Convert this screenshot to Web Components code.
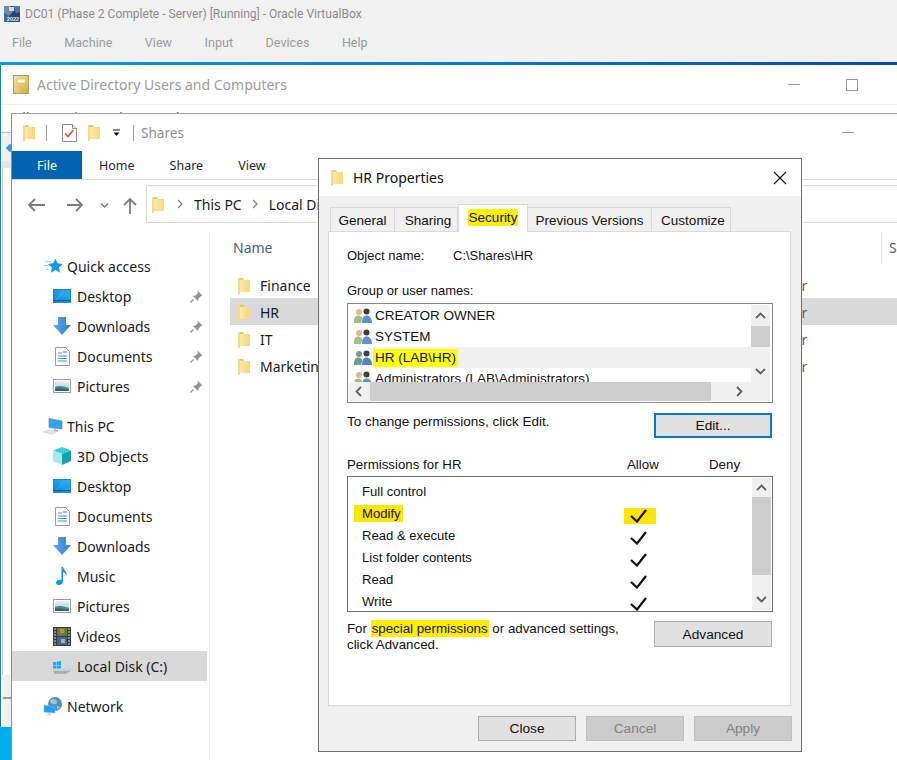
<!DOCTYPE html>
<html lang="en">
<head>
<meta charset="utf-8">
<title>HR Properties</title>
<style>
  html, body { margin: 0; padding: 0; height: 760px; overflow: hidden; background: #00aeef; }
  body { font-family: "Noto Sans", sans-serif; }
</style>
</head>
<body>
<vm-frame title-text="DC01 (Phase 2 Complete - Server) [Running] - Oracle VirtualBox">
  <ad-window>
    <explorer-window>
      <nav-pane slot="nav"></nav-pane>
      <file-pane slot="files"></file-pane>
    </explorer-window>
  </ad-window>
  <props-dialog></props-dialog>
</vm-frame>

<script>
const FOLDER = `<svg viewBox="0 0 12 17"><defs><linearGradient id="f" x1="0" x2="1"><stop offset="0" stop-color="#fce9ab"/><stop offset="1" stop-color="#fbd673"/></linearGradient></defs>
  <path d="M0 1h5l1 2h6v12H2v2H0z" fill="#e9c46c"/><path d="M2 3h10v12H2z" fill="url(#f)"/><path d="M0 1h2v16H0z" fill="#f4d98c"/></svg>`;

const ICONS = {
  folder: FOLDER,
  check: `<svg viewBox="0 0 15 18"><path d="M.5.5h10l4 4v13H.5z" fill="#fff" stroke="#8e8e8e"/><path d="M10.5.5v4h4" fill="#ececec" stroke="#8e8e8e"/><path d="M3 9.500l3 3 5.500-6.500" fill="none" stroke="#e4572e" stroke-width="1.700"/></svg>`,
  vbox: `<svg viewBox="0 0 16 16"><rect width="16" height="16" fill="#24466f"/><path d="M0 0h6l3 6-4 4-5-3z" fill="#6e8aa8"/><path d="M9 0h7v6l-4 1z" fill="#4a7cab"/><path d="M5 1h5v4H5z" fill="#d3dde6"/><path d="M0 8l5 2v6H0z" fill="#3a6a9a"/><text x="9" y="14.500" font-size="5.500" font-weight="700" text-anchor="middle" fill="#eef3f7" font-family="Liberation Sans">2022</text></svg>`,
  book: `<svg viewBox="0 0 16 19"><defs><linearGradient id="b" x1="0" x2="1" y1="0" y2="1"><stop offset="0" stop-color="#f5e8a6"/><stop offset="1" stop-color="#cfae45"/></linearGradient></defs><rect x=".5" y=".5" width="15" height="18" fill="url(#b)" stroke="#b89c4c"/><rect x="4" y="4" width="8" height="4" fill="#fffbe4" stroke="#c7b263" stroke-width=".6"/></svg>`,
  star: `<svg viewBox="0 0 20 20"><path d="M12 1.500l2.300 5.200 5.400.6-4 3.700 1.100 5.600L12 13.800l-4.800 2.800 1.100-5.600-4-3.700 5.400-.6z" fill="#1a96e8"/><path d="M1 5h6M0 9h4M2 13h3" stroke="#8ccbf2" stroke-width="1.200"/></svg>`,
  desktop: `<svg viewBox="0 0 18 14"><defs><linearGradient id="d" x1="0" x2="1" y1="1" y2="0"><stop offset="0" stop-color="#0c86dd"/><stop offset="1" stop-color="#31b2f7"/></linearGradient></defs><rect x=".5" y=".5" width="17" height="13" fill="url(#d)" stroke="#1a82ce"/><path d="M1 11.500h16" stroke="#0a4f8e"/><path d="M3 11l7-7" stroke="#5cc3f7" stroke-width=".5"/></svg>`,
  down: `<svg viewBox="0 0 18 18"><defs><linearGradient id="a" x1="0" x2="1"><stop offset="0" stop-color="#62a9e8"/><stop offset="1" stop-color="#2a7fd3"/></linearGradient></defs><path d="M5 0h8v8h5l-9 10L0 8h5z" fill="url(#a)"/></svg>`,
  doc: `<svg viewBox="0 0 15 19"><path d="M.5.5h10l4 4v14H.5z" fill="#fbfbfb" stroke="#9a9a9a"/><path d="M3 6h4M3 9h9M3 11.500h9M3 14h9" stroke="#3d94dc"/><path d="M8 5h4" stroke="#777"/></svg>`,
  pic: `<svg viewBox="0 0 18 14"><defs><linearGradient id="s" x1="0" x2="0" y1="0" y2="1"><stop offset="0" stop-color="#e6eef6"/><stop offset="1" stop-color="#a7c8de"/></linearGradient></defs><rect x=".5" y=".5" width="17" height="13" fill="#fff" stroke="#9d9d9d"/><rect x="2" y="2" width="14" height="10" fill="url(#s)"/><path d="M2 8c4-2 8-1 14 1v3H2z" fill="#4d8a83"/><path d="M2 10c4-1 8 0 14 1v1H2z" fill="#2e5f73"/></svg>`,
  pc: `<svg viewBox="0 0 20 17"><path d="M6 .5l13 2.500v8l-13-1.500z" fill="#2fa4ea" stroke="#5a8db4" stroke-width=".7"/><path d="M12 10.500v2l3 .5" fill="none" stroke="#9aa3ab" stroke-width="1.300"/><path d="M0 14l6-2 8 1.500-5 2.500z" fill="#e3e6e9" stroke="#c3c8cc" stroke-width=".5"/></svg>`,
  cube: `<svg viewBox="0 0 18 18"><path d="M9 0l9 3.500L9 7 0 3.500z" fill="#38d0d6"/><path d="M0 3.500L9 7v11l-9-4z" fill="#a5ebee"/><path d="M18 3.500L9 7v11l9-4z" fill="#14a0b5"/></svg>`,
  music: `<svg viewBox="0 0 12 18"><path d="M5.500 0h1.600c.4 3 4.400 4.500 3.600 9.500-.3-2.500-2-4-3.700-4.500v9.500c0 2-2 3.500-4 3.500-1.700 0-3-1-3-2.300 0-1.700 2-3 4-3 .6 0 1.200.1 1.500.3z" fill="#1597ea"/></svg>`,
  film: `<svg viewBox="0 0 18 19"><rect width="18" height="19" fill="#3a3a3a"/><rect x="4" y="1" width="10" height="8" fill="#5a7f3a"/><rect x="4" y="10" width="10" height="8" fill="#3b63b8"/><rect x="7" y="2" width="4" height="4" fill="#c98a2e"/><rect x="8" y="12" width="4" height="4" fill="#c8b04a"/><path d="M1 2h2M1 5h2M1 8h2M1 11h2M1 14h2M1 17h2M15 2h2M15 5h2M15 8h2M15 11h2M15 14h2M15 17h2" stroke="#ddd"/></svg>`,
  disk: `<svg viewBox="0 0 20 15"><path d="M1 3.300l3.500-.5v3.200H1zM5 2.700L9 2v4H5zM1 6.500h3.500v3.200L1 9.200zM5 6.500h4v4l-4-.6z" fill="#12b0ee"/><path d="M1 12l5-2.500h13.500v2.500l-6 3H3z" fill="#cfd2d4"/><path d="M1 12l2 2.800h10.500l6-3" fill="#a9adb0"/></svg>`,
  net: `<svg viewBox="0 0 20 19"><circle cx="12" cy="7" r="7" fill="#4b93c9"/><path d="M7 3c3-2 6-1 7 1s-2 4-4 3-3-1-3-4zM14 9c2 0 3 1 3 2l-3 1z" fill="#a4c7bf"/><path d="M1 8l11 2.500V16L1 15z" fill="#1fa2ea" stroke="#7cb7de" stroke-width=".6"/><path d="M5 16l3 .5v2l-4-.5z" fill="#cdd3d8"/></svg>`,
  pin: `<svg viewBox="0 0 13 13"><path d="M7.500.5l5 5-1.500.5-2.500 2.500-.5 2.500-5-5 2.500-.5L8 3z" fill="#8d9296"/><path d="M3.500 9.500L.5 12.500" stroke="#8d9296" stroke-width="1.300"/></svg>`,
  people: `<svg viewBox="0 0 18 16"><circle cx="12.500" cy="3.500" r="3" fill="#4a3a2e"/><path d="M8 15c0-5 1.500-7.500 4.500-7.500S18 10 18 15z" fill="#5b93c8"/><circle cx="5" cy="4" r="3" fill="#d9bd8d"/><path d="M0 14c0-5 1.500-6.500 4.500-6.500 2 0 3.200 1 3.800 3L7 15H0z" fill="#a7bb86"/></svg>`,
  peopleDim: `<svg viewBox="0 0 18 16"><circle cx="12.500" cy="3.500" r="3" fill="#3d4650"/><path d="M8 15c0-5 1.500-7.500 4.500-7.500S18 10 18 15z" fill="#4f89b8"/><circle cx="5" cy="4" r="3" fill="#7d9198"/><path d="M0 14c0-5 1.500-6.500 4.500-6.500 2 0 3.200 1 3.800 3L7 15H0z" fill="#6f9a8f"/></svg>`
};

class AppIcon extends HTMLElement {
  connectedCallback() {
    const name = this.getAttribute('name');
    const w = this.getAttribute('w') || 16;
    const h = this.getAttribute('h') || 16;
    this.attachShadow({mode: 'open'}).innerHTML = `
      <style>
        :host { display: block; width: ${w}px; height: ${h}px; flex: none; }
        svg { display: block; width: 100%; height: 100%; }
      </style>${ICONS[name]}`;
  }
}
customElements.define('app-icon', AppIcon);

class VmFrame extends HTMLElement {
  connectedCallback() {
    const title = this.getAttribute('title-text');
    this.attachShadow({mode: 'open'}).innerHTML = `
      <style>
        :host { display: flex; flex-direction: column; width: 897px; height: 760px; overflow: hidden; }
        .top { height: 62px; background: #f1f1f1; color: #8b8b8b; }
        .title { display: flex; align-items: center; gap: 5px; height: 28px; padding-left: 4px; font-family: Roboto, sans-serif; font-size: 12.05px; }
        .menu { display: flex; gap: 32.5px; padding: 7px 0 0 12px; font-family: Roboto, sans-serif; font-size: 12.6px; color: #9b9b9b; }
        .stripe { height: 3px; background: linear-gradient(90deg, #0a9be6, #0a7ad6 50%, #0048bb); }
        .desk { position: relative; flex: 1; background: #00aeef; }
        ::slotted(props-dialog) { position: absolute; left: 318px; top: 93px; }
      </style>
      <div class="top">
        <div class="title"><app-icon name="vbox"></app-icon><span>${title}</span></div>
        <div class="menu"><span>File</span><span>Machine</span><span>View</span><span>Input</span><span>Devices</span><span>Help</span></div>
      </div>
      <div class="stripe"></div>
      <div class="desk"><slot></slot></div>`;
  }
}
customElements.define('vm-frame', VmFrame);

class AdWindow extends HTMLElement {
  connectedCallback() {
    this.attachShadow({mode: 'open'}).innerHTML = `
      <style>
        :host { display: flex; flex-direction: column; height: 662px; background: #fff; border-left: 1px solid #1a7fb5; box-sizing: border-box; position: relative; }
        .title { display: flex; align-items: center; gap: 8px; height: 39px; padding-left: 12px; font-size: 14px; color: #9c9c9c; border-bottom: 1px solid #ececec; flex: none; }
        .minmax { margin-left: auto; display: flex; align-items: center; gap: 46px; margin-right: 39px; }
        .min { width: 12px; height: 1px; background: #9a9a9a; }
        .max { width: 10px; height: 10px; border: 1px solid #9a9a9a; }
        .menu { height: 8px; margin-bottom: 19px; overflow: hidden; flex: none; display: flex; gap: 16px; padding: 3px 0 0 14px; box-sizing: border-box; font-size: 14px; line-height: 20px; color: #555; }
        .tools { height: 29px; flex: none; background: #f0f0f0; border-top: 1px solid #bfbfbf; box-sizing: border-box; padding: 10px 0 0 6px; }
        .diamond { width: 6px; height: 6px; margin-top: 2px; background: #3b9ade; transform: rotate(45deg); }
        .head { height: 7px; flex: none; background: #e6e6e6; }
        .body { flex: 1; padding: 7px 0 0 2px; border-left: 1px solid #c9c9c9; margin-left: 1px; }
        .status1 { height: 22px; flex: none; margin-left: 2px; background: #f0f0f0; border-bottom: 2px solid #9a9a9a; }
        .status2 { height: 28px; flex: none; background: #f0f0f0; margin-left: 2px; }
        ::slotted(explorer-window) { position: absolute; left: 10px; top: 48px; }
        .tree { width: 8px; height: 17px; margin-left: 6px; background: #d3b65e; }
      </style>
      <div class="title"><app-icon name="book" w="16" h="19"></app-icon><span>Active Directory Users and Computers</span>
        <div class="minmax"><div class="min"></div><div class="max"></div></div></div>
      <div class="menu"><span>File</span><span>Action</span><span>View</span><span>Help</span></div>
      <div class="tools"><div class="diamond"></div></div>
      <div class="head"></div>
      <div class="body"><div class="tree"></div></div>
      <div class="status1"></div>
      <div class="status2"></div>
      <slot></slot>`;
  }
}
customElements.define('ad-window', AdWindow);

class ExplorerWindow extends HTMLElement {
  connectedCallback() {
    this.attachShadow({mode: 'open'}).innerHTML = `
      <style>
        :host { display: flex; flex-direction: column; width: 886px; height: 647px; background: #fff; border-left: 1px solid #8f8f8f; border-top: 1px solid #a0a0a0; box-sizing: border-box; overflow: hidden; font-size: 14px; color: #1a1a1a; }
        .title { height: 37px; flex: none; display: flex; align-items: center; padding-left: 11px; color: #8f8f8f; font-size: 13.6px; }
        .sep { width: 1px; height: 16px; background: #9a9a9a; flex: none; }
        .qdrop { width: 7px; height: 8px; margin: 0 13px 0 13px; flex: none; }
        .min { margin-left: auto; margin-right: 43px; width: 12px; height: 1px; background: #9a9a9a; }
        .ribbon { height: 28px; flex: none; display: flex; align-items: center; border-bottom: 1px solid #dadada; font-size: 12.5px; }
        .file { width: 70px; height: 28px; display: flex; align-items: center; justify-content: center; background: #0063b1; color: #fff; }
        .rtab { margin-left: 17px; margin-right: 35px; color: #2a2a2a; }
        .rtab + .rtab { margin-left: 0; }
        .addr { height: 51px; flex: none; display: flex; align-items: flex-start; padding-top: 5px; box-sizing: border-box; }
        .navbtns { width: 134px; height: 38px; flex: none; display: block; }
        .box { flex: 1; height: 38px; box-sizing: border-box; border: 1px solid #d9d9d9; border-right: 0; display: flex; align-items: center; padding-left: 5px; font-size: 14px; }
        .crumb { width: 8px; height: 10px; margin: 0 10px 0 12px; flex: none; }
        .crumb.b { margin-left: 9px; }
        .main { flex: 1; display: flex; min-height: 0; }
        ::slotted(nav-pane) { width: 197px; flex: none; }
        ::slotted(file-pane) { flex: 1; }
      </style>
      <div class="title"><app-icon name="folder" w="12" h="17"></app-icon>
        <div class="sep" style="margin-left:11px"></div>
        <div style="width:15px"></div><app-icon name="check" w="15" h="18"></app-icon>
        <div style="width:11px"></div><app-icon name="folder" w="12" h="17"></app-icon>
        <svg class="qdrop" viewBox="0 0 7 8"><path d="M0 1h7" stroke="#111"/><path d="M.5 3.500h6L3.500 7z" fill="#111"/></svg>
        <div class="sep"></div><span style="margin-left:7px">Shares</span>
        <div class="min"></div></div>
      <div class="ribbon"><div class="file">File</div><span class="rtab">Home</span><span class="rtab">Share</span><span class="rtab">View</span></div>
      <div class="addr">
        <svg class="navbtns" viewBox="0 0 134 38">
          <g fill="none" stroke="#7c7c7c" stroke-width="1.800">
            <path d="M33 20H17M23 14l-6 6 6 6"/><path d="M55 20h15M64 14l6 6-6 6"/>
            <path d="M89 18.500l3.500 3.500 3.500-3.500" stroke-width="1.500"/>
            <path d="M118 29V14M112 20l6-6 6 6"/>
          </g>
        </svg>
        <div class="box"><app-icon name="folder" w="12" h="17"></app-icon>
          <svg class="crumb" viewBox="0 0 8 10"><path d="M2 1l4 4-4 4" fill="none" stroke="#808080" stroke-width="1.300"/></svg><span>This PC</span>
          <svg class="crumb b" viewBox="0 0 8 10"><path d="M2 1l4 4-4 4" fill="none" stroke="#808080" stroke-width="1.300"/></svg><span>Local Disk (C:)</span>
        </div>
      </div>
      <div class="main"><slot name="nav"></slot><slot name="files"></slot></div>`;
  }
}
customElements.define('explorer-window', ExplorerWindow);

class NavItem extends HTMLElement {
  connectedCallback() {
    const icon = this.getAttribute('icon');
    const [w, h] = (this.getAttribute('size') || '18,18').split(',');
    const top = this.hasAttribute('top');
    const pin = this.hasAttribute('pin');
    this.attachShadow({mode: 'open'}).innerHTML = `
      <style>
        :host { display: flex; align-items: center; height: 30px; font-size: 14px; color: #1a1a1a; }
        :host([selected]) { background: #d9d9d9; }
        :host([gap]) { margin-top: 10px; }
        .ic { width: 20px; display: flex; justify-content: center; flex: none; margin-left: ${top ? 31 : 40}px; margin-right: ${top ? 4 : 5}px; }
        .pin { margin-left: auto; margin-right: 4px; }
      </style>
      <div class="ic"><app-icon name="${icon}" w="${w}" h="${h}"></app-icon></div>
      <span><slot></slot></span>
      ${pin ? '<app-icon class="pin" name="pin" w="13" h="13"></app-icon>' : ''}`;
  }
}
customElements.define('nav-item', NavItem);

class NavPane extends HTMLElement {
  connectedCallback() {
    const rows = [
      ['star', '19,19', 'Quick access', 'top'],
      ['desktop', '18,14', 'Desktop', 'pin'],
      ['down', '18,18', 'Downloads', 'pin'],
      ['doc', '15,19', 'Documents', 'pin'],
      ['pic', '18,14', 'Pictures', 'pin'],
      ['pc', '20,17', 'This PC', 'top gap'],
      ['cube', '18,18', '3D Objects', ''],
      ['desktop', '18,14', 'Desktop', ''],
      ['doc', '15,19', 'Documents', ''],
      ['down', '18,18', 'Downloads', ''],
      ['music', '12,18', 'Music', ''],
      ['pic', '18,14', 'Pictures', ''],
      ['film', '18,19', 'Videos', ''],
      ['disk', '20,15', 'Local Disk (C:)', 'selected'],
      ['net', '20,19', 'Network', 'top gap']
    ];
    this.attachShadow({mode: 'open'}).innerHTML = `
      <style>
        :host { display: block; box-sizing: border-box; width: 197px; padding: 20px 2px 0 0; position: relative; }
        :host::after { content: ""; position: absolute; right: -1px; top: 0; bottom: 0; width: 1px; background: #efefef; }
      </style>
      ${rows.map(r => `<nav-item icon="${r[0]}" size="${r[1]}" ${r[3]}>${r[2]}</nav-item>`).join('')}`;
  }
}
customElements.define('nav-pane', NavPane);

class FileRow extends HTMLElement {
  connectedCallback() {
    this.attachShadow({mode: 'open'}).innerHTML = `
      <style>
        :host { display: flex; align-items: center; box-sizing: border-box; height: 27px; padding-top: 2px; font-size: 14px; color: #1a1a1a; padding-left: 8px; }
        :host([selected]) { background: #d9d9d9; }
        .name { display: flex; align-items: center; gap: 10px; width: 504px; flex: none; }
        .type { color: #5d5d5d; }
      </style>
      <div class="name"><app-icon name="folder" w="12" h="17"></app-icon><slot></slot></div>
      <span class="type">File folder</span>`;
  }
}
customElements.define('file-row', FileRow);

class FilePane extends HTMLElement {
  connectedCallback() {
    this.attachShadow({mode: 'open'}).innerHTML = `
      <style>
        :host { display: block; padding-left: 21px; }
        .head { display: flex; align-items: center; height: 33px; color: #4c607a; font-size: 14px; margin-bottom: 7px; padding-left: 3px; }
        .s { margin-left: auto; padding-left: 7px; border-left: 1px solid #e5e5e5; height: 32px; line-height: 32px; width: 8px; overflow: hidden; }
      </style>
      <div class="head"><span>Name</span><span class="s">Size</span></div>
      <file-row>Finance</file-row>
      <file-row selected>HR</file-row>
      <file-row>IT</file-row>
      <file-row>Marketing</file-row>`;
  }
}
customElements.define('file-pane', FilePane);

class UiButton extends HTMLElement {
  connectedCallback() {
    this.attachShadow({mode: 'open'}).innerHTML = `
      <style>
        :host { display: flex; align-items: center; justify-content: center; box-sizing: border-box; width: 118px; height: 26px; background: #e1e1e1; border: 1px solid #adadad; color: #111; flex: none; font-size: 13.7px; }
        :host([focused]) { border: 2px solid #0078d7; height: 25px; }
        :host([small]) { width: 98px; height: 25px; }
        :host([disabled]) { background: #cccccc; border-color: #bfbfbf; color: #838383; }
      </style><slot></slot>`;
  }
}
customElements.define('ui-button', UiButton);

class ScrollV extends HTMLElement {
  connectedCallback() {
    const a = this.getAttribute('before'), b = this.getAttribute('thumb');
    this.attachShadow({mode: 'open'}).innerHTML = `
      <style>
        :host { display: flex; flex-direction: column; background: #f0f0f0; width: 19px; }
        .b { flex: none; height: ${a}px; display: flex; align-items: center; justify-content: center; }
        .t { flex: none; height: ${b}px; background: #cdcdcd; }
        .e { flex: 1; display: flex; align-items: flex-end; justify-content: center; padding-bottom: 7px; }
        svg { width: 11px; height: 7px; display: block; }
      </style>
      <div class="b"><svg viewBox="0 0 11 7"><path d="M1 6l4.500-4.500L10 6" fill="none" stroke="#606060" stroke-width="1.800"/></svg></div>
      <div class="t"></div>
      <div class="e"><svg viewBox="0 0 11 7"><path d="M1 1l4.500 4.500L10 1" fill="none" stroke="#606060" stroke-width="1.800"/></svg></div>`;
  }
}
customElements.define('scroll-v', ScrollV);

class UserRow extends HTMLElement {
  connectedCallback() {
    const on = this.hasAttribute('selected');
    this.attachShadow({mode: 'open'}).innerHTML = `
      <style>
        :host { display: flex; align-items: center; height: 21px; padding-left: 5px; flex: none; font-size: 13.5px; }
        .text { flex: 1; height: 21px; display: flex; align-items: center; margin-left: 1px; }
        :host([selected]) .text { background: #f0f0f0; }
        .hl { background: #ffff00; padding: 0 2px; line-height: 18px; }
      </style>
      <app-icon name="${on ? 'peopleDim' : 'people'}" w="18" h="16"></app-icon>
      <div class="text"><span class="${on ? 'hl' : ''}" style="${on ? '' : 'padding-left:2px'}"><slot></slot></span></div>`;
  }
}
customElements.define('user-row', UserRow);

class PermRow extends HTMLElement {
  connectedCallback() {
    const hl = this.hasAttribute('hl');
    const allow = this.hasAttribute('allow');
    this.attachShadow({mode: 'open'}).innerHTML = `
      <style>
        :host { display: flex; align-items: center; height: 22px; flex: none; padding-left: 14px; font-size: 13.1px; }
        .name { width: 262px; flex: none; }
        .hl { background: #ffe600; padding: 1px 2px 1px 8px; margin-left: -8px; }
        .cell { width: 32px; height: 16px; margin-top: 6px; padding-right: 3px; box-sizing: border-box; display: flex; align-items: center; justify-content: center; }
        .cell.on { background: #ffe600; }
        svg { width: 17px; height: 14px; display: block; }
      </style>
      <div class="name"><span class="${hl ? 'hl' : ''}"><slot></slot></span></div>
      <div class="cell ${hl ? 'on' : ''}">${allow ? '<svg viewBox="0 0 17 14"><path d="M1 7l6 5.500L16 1" fill="none" stroke="#111" stroke-width="2.200"/></svg>' : ''}</div>`;
  }
}
customElements.define('perm-row', PermRow);

class PropsDialog extends HTMLElement {
  connectedCallback() {
    this.attachShadow({mode: 'open'}).innerHTML = `
      <style>
        :host { display: flex; flex-direction: column; box-sizing: border-box; width: 484px; height: 594px; background: #f0f0f0; border: 1px solid #6f6f6f; font-family: "Liberation Sans", Arial, sans-serif; font-size: 13.5px; color: #111; }
        .head { height: 37px; flex: none; background: #fff; display: flex; align-items: center; padding-left: 12px; gap: 10px; font-family: "Noto Sans", sans-serif; font-size: 14px; }
        .close { margin-left: auto; margin-right: 14px; width: 14px; height: 14px; }
        .tabs { height: 35px; flex: none; display: flex; align-items: flex-end; padding-left: 11px; position: relative; z-index: 1; }
        .tab { height: 24px; box-sizing: border-box; padding-top: 2px; border: 1px solid #d9d9d9; border-bottom: 0; border-left-width: 0; display: flex; align-items: center; justify-content: center; }
        .tab:first-child { border-left-width: 1px; }
        .tab.pad { padding-left: 4px; }
        .tab.on { height: 28px; margin-bottom: -1px; background: #fff; border-left-width: 1px; padding-top: 0; padding-bottom: 3px; }
        .hl { background: #ffee00; padding: 1px 1px; }
        .panel { margin: 0 10px 0 9px; height: 475px; box-sizing: border-box; flex: none; background: #fff; border: 1px solid #d9d9d9; padding: 15px 17px 0 18px; }
        .obj { display: flex; height: 16px; align-items: center; font-size: 13px; }
        .obj span:first-child { width: 106px; }
        .lbl { height: 16px; line-height: 16px; margin-top: 20px; font-size: 13px; }
        .list { height: 100px; margin-top: 4px; box-sizing: border-box; border: 1px solid #828790; padding: 1px 2px 1px 1px; display: grid; grid-template-columns: 1fr 19px; grid-template-rows: 1fr 19px; }
        .rows { overflow: hidden; display: flex; flex-direction: column; min-height: 0; }
        .hs { grid-column: 1 / 2; background: #f0f0f0; display: flex; align-items: center; }
        .hs .thumb { width: 341px; height: 19px; background: #cdcdcd; margin-left: 21px; flex: none; }
        .hs svg { width: 7px; height: 11px; flex: none; position: relative; }
        .corner { background: #f0f0f0; }
        .edit { display: flex; justify-content: space-between; align-items: flex-start; margin-top: 10px; height: 25px; margin-right: 1px; }
        .edit span { padding-top: 1px; }
        .perm { display: flex; height: 16px; margin-top: 18px; align-items: center; font-size: 13.3px; }
        .perm .a { margin-left: auto; width: 82px; }
        .perm .d { width: 32px; margin-right: 32px; }
        .plist { height: 136px; margin-top: 4px; box-sizing: border-box; border: 1px solid #6f6f6f; display: flex; overflow: hidden; }
        .prows { flex: 1; padding-top: 3px; overflow: hidden; display: flex; flex-direction: column; }
        .plist scroll-v { margin: 1px 1px 1px 0; }
        .foot { display: flex; justify-content: space-between; margin-top: 9px; margin-right: 1px; font-size: 13.3px; }
        .foot p { margin: 0; line-height: 16px; }
        .btns { display: flex; justify-content: flex-end; gap: 10px; padding: 10px 9px 0 0; }
      </style>
      <div class="head"><app-icon name="folder" w="12" h="17"></app-icon><span>HR Properties</span>
        <svg class="close" viewBox="0 0 14 14"><path d="M1 1l12 12M13 1L1 13" stroke="#111" stroke-width="1.100"/></svg></div>
      <div class="tabs">
        <div class="tab" style="width:65px">General</div>
        <div class="tab pad" style="width:63px">Sharing</div>
        <div class="tab on" style="width:70px"><span class="hl">Security</span></div>
        <div class="tab" style="width:124px">Previous Versions</div>
        <div class="tab pad" style="width:79px">Customize</div>
      </div>
      <div class="panel">
        <div class="obj"><span>Object name:</span><span>C:\\Shares\\HR</span></div>
        <div class="lbl">Group or user names:</div>
        <div class="list">
          <div class="rows">
            <user-row>CREATOR OWNER</user-row>
            <user-row>SYSTEM</user-row>
            <user-row selected>HR (LAB\\HR)</user-row>
            <user-row>Administrators (LAB\\Administrators)</user-row>
          </div>
          <scroll-v before="21" thumb="21"></scroll-v>
          <div class="hs">
            <svg viewBox="0 0 7 11" style="margin-left:6px;margin-right:-13px"><path d="M6 1L1.500 5.500 6 10" fill="none" stroke="#606060" stroke-width="1.800"/></svg>
            <div class="thumb"></div>
            <svg viewBox="0 0 7 11" style="margin-left:25px"><path d="M1 1l4.500 4.500L1 10" fill="none" stroke="#606060" stroke-width="1.800"/></svg>
          </div>
          <div class="corner"></div>
        </div>
        <div class="edit"><span>To change permissions, click Edit.</span><ui-button focused>Edit...</ui-button></div>
        <div class="perm"><span>Permissions for HR</span><span class="a">Allow</span><span class="d">Deny</span></div>
        <div class="plist">
          <div class="prows">
            <perm-row>Full control</perm-row>
            <perm-row hl allow>Modify</perm-row>
            <perm-row allow>Read &amp; execute</perm-row>
            <perm-row allow>List folder contents</perm-row>
            <perm-row allow>Read</perm-row>
            <perm-row allow>Write</perm-row>
          </div>
          <scroll-v before="19" thumb="78"></scroll-v>
        </div>
        <div class="foot">
          <p>For <span class="hl">special permissions</span> or advanced settings,<br>click Advanced.</p>
          <ui-button>Advanced</ui-button>
        </div>
      </div>
      <div class="btns">
        <ui-button small>Close</ui-button>
        <ui-button small disabled>Cancel</ui-button>
        <ui-button small disabled>Apply</ui-button>
      </div>`;
  }
}
customElements.define('props-dialog', PropsDialog);
</script>
</body>
</html>
